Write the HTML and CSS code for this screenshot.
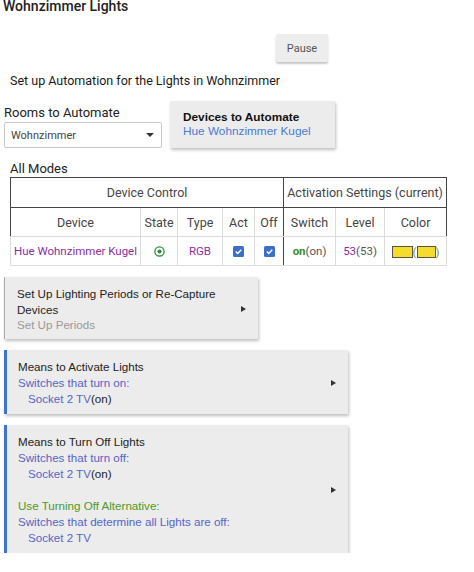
FILE: index.html
```html
<!DOCTYPE html>
<html>
<head>
<meta charset="utf-8">
<link rel="stylesheet" href="styles.css">
</head>
<body>
<h1 class="title">Wohnzimmer Lights</h1>
<div class="pause-row"><button class="pause">Pause</button></div>
<p class="setup">Set up Automation for the Lights in Wohnzimmer</p>
<div class="top-row">
  <div class="rooms">
    <div class="label">Rooms to Automate</div>
    <div class="select"><span>Wohnzimmer</span><span class="caret"></span></div>
  </div>
  <div class="devcard">
    <div class="devcard-title">Devices to Automate</div>
    <div class="devcard-link">Hue Wohnzimmer Kugel</div>
  </div>
</div>
<div class="modes">All Modes</div>
<table class="grid">
  <colgroup>
    <col class="c-dev"><col class="c-state"><col class="c-type"><col class="c-act"><col class="c-off"><col class="c-sw"><col class="c-lvl"><col class="c-col">
  </colgroup>
  <tr class="r1">
    <td colspan="5" class="sep">Device Control</td>
    <td colspan="3">Activation Settings (current)</td>
  </tr>
  <tr class="r2">
    <td>Device</td><td>State</td><td>Type</td><td>Act</td><td class="sep">Off</td><td>Switch</td><td>Level</td><td>Color</td>
  </tr>
  <tr class="r3">
    <td class="purple dev">Hue Wohnzimmer Kugel</td>
    <td><svg class="radio" width="11" height="11" viewBox="0 0 11 11"><circle cx="5.5" cy="5.5" r="4.6" fill="none" stroke="#2f8c3a" stroke-width="1.3"/><circle cx="5.5" cy="5.5" r="2.1" fill="#2f8c3a"/></svg></td>
    <td class="purple">RGB</td>
    <td><svg class="chk" width="11" height="11" viewBox="0 0 11 11"><rect x="0" y="0" width="11" height="11" rx="1.5" fill="#3d6fca"/><path d="M2.8 5.6 L4.7 7.5 L8.3 3.8" fill="none" stroke="#fff" stroke-width="1.4"/></svg></td>
    <td class="sep"><svg class="chk" width="11" height="11" viewBox="0 0 11 11"><rect x="0" y="0" width="11" height="11" rx="1.5" fill="#3d6fca"/><path d="M2.8 5.6 L4.7 7.5 L8.3 3.8" fill="none" stroke="#fff" stroke-width="1.4"/></svg></td>
    <td><span class="on">on</span><span class="dim">(on)</span></td>
    <td><span class="purple">53</span><span class="dim">(53)</span></td>
    <td class="colorcell"><span class="swatch"></span><span class="paren">(</span><span class="swatch sm"></span><span class="paren">)</span></td>
  </tr>
</table>

<div class="card grey w1">
  <div class="card-text">
    <div>Set Up Lighting Periods or Re-Capture Devices</div>
    <div class="muted">Set Up Periods</div>
  </div>
  <span class="arrow"></span>
</div>

<div class="card blue w2">
  <div class="card-text">
    <div>Means to Activate Lights</div>
    <div class="link">Switches that turn on:</div>
    <div class="indent"><span class="link">Socket 2 TV</span>(on)</div>
  </div>
  <span class="arrow"></span>
</div>

<div class="card blue w2">
  <div class="card-text">
    <div>Means to Turn Off Lights</div>
    <div class="link">Switches that turn off:</div>
    <div class="indent"><span class="link">Socket 2 TV</span>(on)</div>
    <div class="blank">&nbsp;</div>
    <div class="green">Use Turning Off Alternative:</div>
    <div class="link">Switches that determine all Lights are off:</div>
    <div class="indent link">Socket 2 TV</div>
  </div>
  <span class="arrow"></span>
</div>
</body>
</html>
```

FILE: styles.css
```css
html, body {
  margin: 0;
  padding: 0;
  background: #fff;
}
body {
  font-family: Roboto, "Liberation Sans", Arial, sans-serif;
  color: #222;
  width: 474px;
  overflow: hidden;
}
.title {
  margin: -1px 0 0 3px;
  font-size: 14px;
  line-height: 14px;
  font-weight: 500;
  color: #222;
}
.pause-row {
  display: flex;
  margin-top: 21px;
  padding-left: 276px;
}
.pause {
  width: 52px;
  height: 28px;
  border: none;
  border-radius: 2px;
  background: #ededed;
  box-shadow: 0 2px 2px rgba(0,0,0,0.22);
  font-family: Roboto, sans-serif;
  font-size: 11px;
  color: #555;
  padding: 0;
}
.setup {
  margin: 11px 0 0 10px;
  font-size: 12.5px;
  line-height: 15px;
  font-weight: 400;
  color: #1a1a1a;
}
.top-row {
  display: flex;
  align-items: flex-end;
  gap: 8px;
  margin: 13px 0 0 4px;
}
.rooms {
  display: flex;
  flex-direction: column;
  gap: 1px;
}
.label {
  font-size: 13px;
  line-height: 16px;
  color: #222;
}
.select {
  box-sizing: border-box;
  width: 158px;
  height: 26px;
  border: 1px solid #c8c8c8;
  border-radius: 2px;
  display: flex;
  align-items: center;
  justify-content: space-between;
  padding: 0 7px 0 6px;
  font-size: 11px;
  color: #444;
}
.caret {
  width: 0;
  height: 0;
  border-left: 4px solid transparent;
  border-right: 4px solid transparent;
  border-top: 4px solid #333;
}
.devcard {
  box-sizing: border-box;
  width: 165px;
  height: 47px;
  padding: 9px 13px 10px;
  background: #ececec;
  box-shadow: 1px 2px 3px rgba(0,0,0,0.25);
  font-family: "Liberation Sans", Arial, sans-serif;
  font-size: 11.8px;
  line-height: 14px;
}
.devcard-title {
  font-weight: bold;
  color: #111;
}
.devcard-link {
  color: #4a7bd6;
}
.modes {
  margin: 13px 0 0 10px;
  font-size: 13px;
  line-height: 16px;
  color: #222;
}
.grid {
  margin-left: 10px;
  border-collapse: collapse;
  table-layout: fixed;
  width: 436px;
  font-size: 12.5px;
  color: #444;
}
.c-dev { width: 130px; }
.c-state { width: 37px; }
.c-type { width: 45px; }
.c-act { width: 32px; }
.c-off { width: 29px; }
.c-sw { width: 52px; }
.c-lvl { width: 49px; }
.c-col { width: 62px; }
.grid td {
  text-align: center;
  padding: 0;
  border: 1px solid #dcdcdc;
  white-space: nowrap;
  overflow: hidden;
}
.grid .r1 td {
  height: 29px;
  border: 1px solid #444;
}
.grid .r2 td {
  height: 28px;
  border-top: 1px solid #444;
}
.grid .r2 td:first-child {
  border-left: 1px solid #444;
}
.grid .r2 td:last-child {
  border-right: 1px solid #444;
}
.grid .r3 td {
  height: 28px;
  font-size: 11.5px;
}
.grid td.sep {
  border-right: 1px solid #444;
}
.purple {
  color: #8c2e9e;
}
.dev {
  font-size: 11.5px;
}
.on {
  color: #3a8a1e;
  font-weight: bold;
}
.dim {
  color: #555;
}
.radio, .chk {
  display: block;
  margin: 0 auto;
}
.colorcell {
  font-size: 0;
}
.swatch {
  display: inline-block;
  vertical-align: middle;
  box-sizing: border-box;
  width: 21px;
  height: 12px;
  background: #f4dc2c;
  border: 1px solid #555;
}
.swatch.sm {
  width: 19px;
}
.paren {
  display: inline-block;
  vertical-align: middle;
  font-size: 11.5px;
  color: #888;
  line-height: 12px;
}
.card {
  box-sizing: border-box;
  display: flex;
  align-items: center;
  margin: 11px 0 0 4px;
  padding: 9px 12px 7px 13px;
  background: #ececec;
  box-shadow: 1px 2px 3px rgba(0,0,0,0.25);
  font-family: "Liberation Sans", Arial, sans-serif;
  font-size: 11.6px;
  line-height: 16px;
  color: #222;
}
.card.grey {
  border-left: 1px solid #aaa;
  padding-top: 9px;
  padding-bottom: 6px;
  padding-left: 12px;
  line-height: 15.6px;
}
.card.blue {
  border-left: 3px solid #3f74cc;
  padding-left: 11px;
}
.w1 { width: 254px; }
.w2 { width: 344px; }
.card-text {
  flex: 1;
}
.muted {
  color: #999;
}
.link {
  color: #5664c6;
}
.green {
  color: #4a9a2a;
}
.indent {
  padding-left: 10px;
}
.arrow {
  width: 0;
  height: 0;
  border-left: 5px solid #333;
  border-top: 3px solid transparent;
  border-bottom: 3px solid transparent;
  margin-left: 8px;
}
```
